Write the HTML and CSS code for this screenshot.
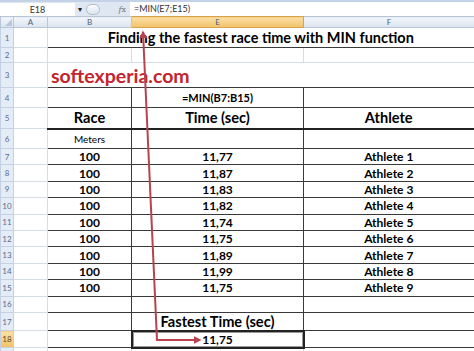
FILE: index.html
```html
<!DOCTYPE html>
<html lang="en">

<head>
    <meta charset="UTF-8">
    <meta name="viewport" content="width=device-width, initial-scale=1.0">
    <title>MIN function - fastest race time</title>
    <link rel="stylesheet" href="styles.css">
</head>

<body>
    <div class="formula-bar">
        <div class="name-box">E18</div>
        <span class="drop">&#9662;</span>
        <span class="grip"></span>
        <span class="fx"><i>f</i>x</span>
        <div class="formula">=MIN(E7;E15)</div>
    </div>

    <table class="sheet">
        <colgroup>
            <col class="c-head">
            <col class="c-a">
            <col class="c-b">
            <col class="c-e">
            <col class="c-f">
        </colgroup>
        <tr class="r-head">
            <th class="corner"><span class="tri"></span></th>
            <th class="col-head">A</th>
            <th class="col-head">B</th>
            <th class="col-head active">E</th>
            <th class="col-head">F</th>
        </tr>
        <tr class="r1">
            <th class="row-head">1</th>
            <td></td>
            <td colspan="3" class="t title">Finding the fastest race time with MIN function</td>
        </tr>
        <tr class="r2">
            <th class="row-head">2</th>
            <td></td>
            <td class="t-left"></td>
            <td></td>
            <td></td>
        </tr>
        <tr class="r3">
            <th class="row-head">3</th>
            <td></td>
            <td colspan="3" class="t brand">softexperia.com</td>
        </tr>
        <tr class="r4">
            <th class="row-head">4</th>
            <td></td>
            <td class="t"></td>
            <td class="t formula-cell">=MIN(B7:B15)</td>
            <td class="t"></td>
        </tr>
        <tr class="r5">
            <th class="row-head">5</th>
            <td></td>
            <td class="t big">Race</td>
            <td class="t big">Time (sec)</td>
            <td class="t big">Athlete</td>
        </tr>
        <tr class="r6">
            <th class="row-head">6</th>
            <td></td>
            <td class="t small">Meters</td>
            <td class="t"></td>
            <td class="t"></td>
        </tr>
        <tr class="r">
            <th class="row-head">7</th>
            <td></td>
            <td class="t">100</td>
            <td class="t">11,77</td>
            <td class="t">Athlete 1</td>
        </tr>
        <tr class="r">
            <th class="row-head">8</th>
            <td></td>
            <td class="t">100</td>
            <td class="t">11,87</td>
            <td class="t">Athlete 2</td>
        </tr>
        <tr class="r">
            <th class="row-head">9</th>
            <td></td>
            <td class="t">100</td>
            <td class="t">11,83</td>
            <td class="t">Athlete 3</td>
        </tr>
        <tr class="r">
            <th class="row-head">10</th>
            <td></td>
            <td class="t">100</td>
            <td class="t">11,82</td>
            <td class="t">Athlete 4</td>
        </tr>
        <tr class="r">
            <th class="row-head">11</th>
            <td></td>
            <td class="t">100</td>
            <td class="t">11,74</td>
            <td class="t">Athlete 5</td>
        </tr>
        <tr class="r">
            <th class="row-head">12</th>
            <td></td>
            <td class="t">100</td>
            <td class="t">11,75</td>
            <td class="t">Athlete 6</td>
        </tr>
        <tr class="r">
            <th class="row-head">13</th>
            <td></td>
            <td class="t">100</td>
            <td class="t">11,89</td>
            <td class="t">Athlete 7</td>
        </tr>
        <tr class="r">
            <th class="row-head">14</th>
            <td></td>
            <td class="t">100</td>
            <td class="t">11,99</td>
            <td class="t">Athlete 8</td>
        </tr>
        <tr class="r">
            <th class="row-head">15</th>
            <td></td>
            <td class="t">100</td>
            <td class="t">11,75</td>
            <td class="t">Athlete 9</td>
        </tr>
        <tr class="r">
            <th class="row-head">16</th>
            <td></td>
            <td class="t"></td>
            <td class="t"></td>
            <td class="t"></td>
        </tr>
        <tr class="r">
            <th class="row-head">17</th>
            <td></td>
            <td class="t"></td>
            <td class="t big">Fastest Time (sec)</td>
            <td class="t"></td>
        </tr>
        <tr class="r">
            <th class="row-head active">18</th>
            <td></td>
            <td class="t"></td>
            <td class="t selected">11,75</td>
            <td class="t"></td>
        </tr>
        <tr class="r19">
            <th class="row-head"></th>
            <td></td>
            <td></td>
            <td></td>
            <td></td>
        </tr>
    </table>

    <!-- arrow from the formula bar down to the result cell -->
    <svg class="arrow" width="474" height="351" viewBox="0 0 474 351">
        <defs>
            <marker id="head" viewBox="0 0 10 10" refX="8" refY="5" markerWidth="4" markerHeight="4" orient="auto-start-reverse">
                <path d="M0 0 L10 5 L0 10 z" fill="#b8434e"></path>
            </marker>
        </defs>
        <polyline points="143,32 157,340 200,340" fill="none" stroke="#b8434e" stroke-width="2" marker-start="url(#head)" marker-end="url(#head)"></polyline>
    </svg>
</body>

</html>
```

FILE: styles.css
```css
body {
    margin: 0;
    width: 474px;
    height: 351px;
    overflow: hidden;
    position: relative;
    background-color: #fff;
    font-family: Lato, "Noto Sans", sans-serif;
    color: #000;
}

/* formula bar */

.formula-bar {
    display: flex;
    align-items: center;
    height: 16px;
    box-sizing: border-box;
    background-color: #dfe7f2;
    border-top: 2px solid #c3d2e6;
    font-size: 9px;
    color: #333;
}

.name-box {
    width: 75px;
    height: 13px;
    line-height: 13px;
    background-color: #fff;
    text-align: center;
}

.drop {
    width: 10px;
    font-size: 8px;
    text-align: center;
    color: #222;
}

.grip {
    width: 14px;
    height: 11px;
    margin-left: 1px;
    border: 1px solid #b0bccd;
    border-radius: 7px;
    background: linear-gradient(#fbfcfe, #dde4ee);
    box-sizing: border-box;
}

.fx {
    width: 30px;
    text-align: right;
    padding-right: 4px;
    box-sizing: border-box;
    font-family: "DejaVu Serif", serif;
    font-size: 8px;
    color: #777;
}

.formula {
    flex: 1;
    height: 14px;
    line-height: 14px;
    background-color: #fff;
    padding-left: 4px;
}

/* sheet */

.sheet {
    border-collapse: collapse;
    table-layout: fixed;
    width: 474px;
}

.c-head { width: 13px; }
.c-a { width: 34px; }
.c-b { width: 84px; }
.c-e { width: 172px; }
.c-f { width: 171px; }

.sheet th,
.sheet td {
    padding: 0;
    border: 1px solid #d6dde8;
    text-align: center;
    white-space: nowrap;
    overflow: visible;
}

.sheet .r-head th {
    height: 10px;
    font-size: 8px;
    font-weight: normal;
    color: #4c5d7a;
    background: linear-gradient(#f4f7fb, #dae3ef);
    border-color: #b9c6d8;
    line-height: 9px;
}

.sheet .r-head .active {
    background: linear-gradient(#fbe0a8, #f2c267);
    border-color: #d6a44c;
}

.corner {
    position: relative;
}

.tri {
    position: absolute;
    right: 1px;
    bottom: 1px;
    width: 0;
    height: 0;
    border-left: 7px solid transparent;
    border-bottom: 7px solid #b7c8de;
}

.sheet .row-head {
    font-size: 8px;
    font-weight: normal;
    color: #5b6d8c;
    background-color: #e4ecf7;
    border-color: #c5d1e2;
}

.sheet .row-head.active {
    background: linear-gradient(#fbe0a8, #f2c267);
    color: #5a4a2a;
}

.r1 { height: 20px; }
.r2 { height: 15px; }
.r3 { height: 25px; }
.r4 { height: 20px; }
.r5 { height: 21px; }
.r6 { height: 20px; }
.r { height: 16.4px; }
.r19 { height: 8px; }

.sheet .t {
    border-color: #3a3a3a;
    font-size: 12px;
    font-weight: bold;
}

.sheet .t-left {
    border-left-color: #3a3a3a;
}

.sheet .r1 .t {
    border-top-color: #b9c6d8;
}

.sheet .r3 .t {
    border-top-color: #d6dde8;
}

.sheet td:last-child {
    border-right: 2px solid #8d8d8d;
}

.sheet .title {
    font-size: 14.5px;
}

.sheet .brand {
    text-align: left;
    padding-left: 3px;
    font-size: 19.5px;
    color: #c3242e;
}

.sheet .formula-cell {
    font-size: 11px;
}

.sheet .big {
    font-size: 14.6px;
}

.sheet .small {
    font-size: 10px;
    font-weight: normal;
}

.sheet .r5 .t {
    border-bottom: 2px solid #222;
}

.sheet .selected {
    border: 2px solid #222;
    box-shadow: inset 0 0 0 1px #9a9a9a;
}

.sheet .r19 td {
    border-bottom: none;
}

/* overlay arrow */

.arrow {
    position: absolute;
    left: 0;
    top: 0;
    pointer-events: none;
}
```
